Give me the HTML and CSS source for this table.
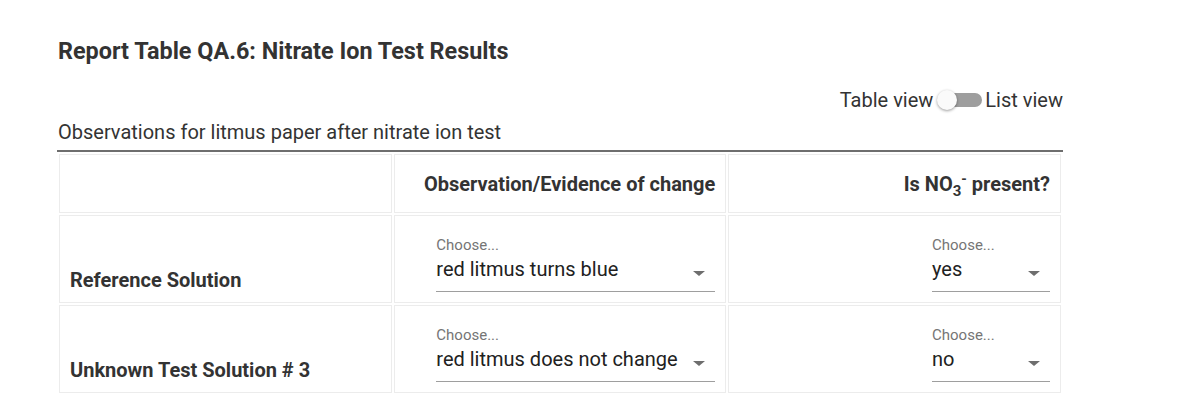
FILE: index.html
```html
<!DOCTYPE html>
<html>
<head>
<meta charset="utf-8">
<link rel="stylesheet" href="styles.css">
</head>
<body>
<div class="page">
  <h2 class="title">Report Table QA.6: Nitrate Ion Test Results</h2>
  <div class="toggle-row">
    <span class="toggle-text">Table view</span>
    <span class="switch"><span class="track"></span><span class="thumb"></span></span>
    <span class="toggle-text">List view</span>
  </div>
  <div class="caption">Observations for litmus paper after nitrate ion test</div>
  <table class="results">
    <tr class="head-row">
      <th></th>
      <th>Observation/Evidence of change</th>
      <th>Is NO<sub>3</sub><sup>-</sup> present?</th>
    </tr>
    <tr class="body-row">
      <td class="label">Reference Solution</td>
      <td class="sel-cell">
        <div class="select wide">
          <div class="sel-label">Choose...</div>
          <div class="sel-field"><span class="sel-value">red litmus turns blue</span><span class="arrow"></span></div>
        </div>
      </td>
      <td class="sel-cell">
        <div class="select narrow">
          <div class="sel-label">Choose...</div>
          <div class="sel-field"><span class="sel-value">yes</span><span class="arrow"></span></div>
        </div>
      </td>
    </tr>
    <tr class="body-row">
      <td class="label">Unknown Test Solution # 3</td>
      <td class="sel-cell">
        <div class="select wide">
          <div class="sel-label">Choose...</div>
          <div class="sel-field"><span class="sel-value">red litmus does not change</span><span class="arrow"></span></div>
        </div>
      </td>
      <td class="sel-cell">
        <div class="select narrow">
          <div class="sel-label">Choose...</div>
          <div class="sel-field"><span class="sel-value">no</span><span class="arrow"></span></div>
        </div>
      </td>
    </tr>
  </table>
</div>
</body>
</html>
```
FILE: styles.css
```css
html, body {
  margin: 0;
  padding: 0;
  background: #fff;
}
body {
  font-family: Roboto, "Liberation Sans", sans-serif;
  color: #333;
}
.page {
  width: 1006px;
  padding: 37px 0 0 57px;
}
.title {
  margin: 0 0 0 1px;
  font-size: 23.4px;
  line-height: 28px;
  font-weight: 700;
  color: #333;
}
.toggle-row {
  display: flex;
  justify-content: flex-end;
  align-items: center;
  margin-top: 23px;
  height: 24px;
}
.toggle-text {
  font-size: 20px;
  line-height: 24px;
  color: #333;
}
.switch {
  position: relative;
  display: inline-block;
  width: 45px;
  height: 20px;
  margin: 0 3px 0 4px;
}
.track {
  position: absolute;
  left: 11px;
  top: 3px;
  width: 34px;
  height: 14px;
  border-radius: 7px;
  background: #9e9e9e;
}
.thumb {
  position: absolute;
  left: 0;
  top: 0;
  width: 20px;
  height: 20px;
  border-radius: 50%;
  background: #fafafa;
  box-shadow: 0 1px 3px rgba(0,0,0,0.4);
}
.caption {
  margin-top: 8px;
  padding-left: 1px;
  font-size: 20px;
  line-height: 24px;
  padding-bottom: 6px;
  border-bottom: 2px solid #6e6e6e;
  color: #333;
}
.results {
  width: 1006px;
  border-collapse: separate;
  border-spacing: 2px;
  table-layout: fixed;
}
.results th, .results td {
  border: 1px solid #ececec;
  padding: 0 10px;
}
.head-row th {
  height: 57px;
  text-align: right;
  vertical-align: middle;
  font-size: 20px;
  font-weight: 700;
  color: #333;
}
.head-row sub {
  font-size: 15px;
  vertical-align: -5px;
  line-height: 0;
}
.head-row sup {
  font-size: 14px;
  vertical-align: 7px;
  line-height: 0;
}
.body-row td {
  height: 76px;
  padding-bottom: 10px;
  vertical-align: bottom;
}
.body-row td.label {
  padding-bottom: 11px;
  height: 75px;
}
.label {
  font-size: 20px;
  font-weight: 700;
  line-height: 22px;
  color: #333;
}
.sel-cell {
  text-align: right;
}
.select {
  display: inline-block;
  text-align: left;
}
.select.wide { width: 279px; }
.select.narrow { width: 118px; }
.sel-label {
  font-size: 15px;
  line-height: 16px;
  color: #757575;
}
.sel-field {
  display: flex;
  justify-content: space-between;
  align-items: flex-start;
  height: 34px;
  margin-top: 4px;
  border-bottom: 1px solid #9e9e9e;
}
.sel-value {
  font-size: 20px;
  line-height: 24px;
  color: #212121;
}
.arrow {
  width: 0;
  height: 0;
  margin: 14px 10px 0 0;
  border-left: 6px solid transparent;
  border-right: 6px solid transparent;
  border-top: 5px solid #6e6e6e;
}
```
